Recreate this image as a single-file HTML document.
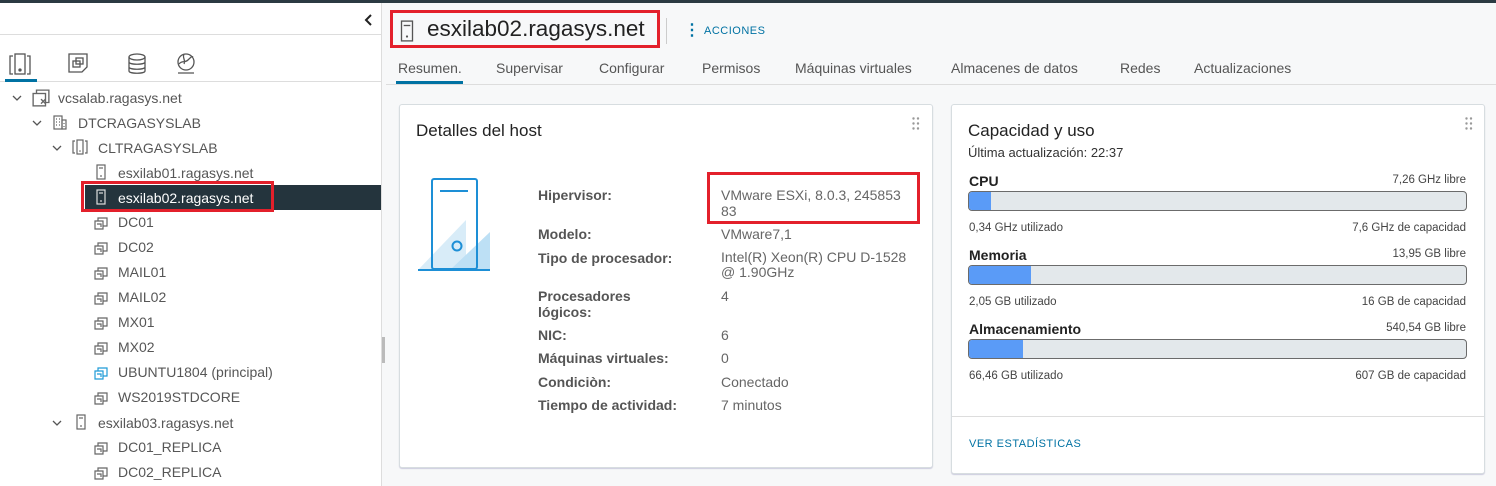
<!DOCTYPE html>
<html><head><meta charset="utf-8"><style>
*{box-sizing:border-box;margin:0;padding:0}
body{width:1496px;height:486px;overflow:hidden;font-family:"Liberation Sans",sans-serif;background:#f7f8f9;position:relative;color:#333}
.a{position:absolute;white-space:nowrap}
.tree{font-size:14px;color:#565656}
.lab{font-size:14px;font-weight:bold;color:#555}
.val{font-size:14px;color:#666}
.sm{font-size:11.5px;color:#444}
.bar{position:absolute;left:968px;width:499px;height:20px;border:1px solid #6b6b6b;border-radius:4px;background:#e3e8eb;overflow:hidden}
.bar div{height:100%;background:#5a9bf7}
.ic{position:absolute}
</style></head><body>
<svg width="0" height="0" style="position:absolute">
<defs>
<symbol id="host" viewBox="0 0 16 16"><g fill="none" stroke="currentColor" stroke-width="1.2"><rect x="4" y="1" width="8" height="14"/><path d="M6 4h4"/></g><circle cx="8" cy="12" r="0.9" fill="currentColor"/></symbol>
<symbol id="vm" viewBox="0 0 16 16"><g fill="none" stroke="currentColor" stroke-width="1.2"><path d="M2 6h8v8H2z"/><path d="M5 6V3h9v8h-4"/><path d="M4 9h4v3"/></g></symbol>
<symbol id="vc" viewBox="0 0 16 16"><g fill="none" stroke="currentColor" stroke-width="1.2"><rect x="1" y="4" width="11" height="11"/><path d="M4 4V1h11v11h-3"/><path d="M8 9l4 4M12 9l-4 4"/></g></symbol>
<symbol id="dc" viewBox="0 0 16 16"><g fill="none" stroke="currentColor" stroke-width="1.2"><rect x="2" y="2" width="8" height="13"/><rect x="10" y="6" width="4" height="9"/><path d="M4 5h1M7 5h1M4 8h1M7 8h1M4 11h1M7 11h1M12 9v1M12 12v1"/></g></symbol>
<symbol id="cl" viewBox="0 0 16 16"><g fill="none" stroke="currentColor" stroke-width="1.2"><path d="M3 2H1v12h2M13 2h2v12h-2"/><rect x="5" y="1" width="6" height="14"/></g><circle cx="8" cy="12" r="0.8" fill="currentColor"/></symbol>
</defs></svg>
<div class="a" style="left:0;top:0;width:1496px;height:3px;background:#2b3a42"></div>
<div class="a" style="left:0;top:3px;width:382px;height:483px;background:#fff;border-right:1px solid #ddd"></div>
<div class="a" style="left:382px;top:337px;width:3px;height:26px;background:#bbb"></div>
<svg class="ic" style="left:364px;top:13px" width="10" height="14"><path d="M7 2L2 7l5 5" fill="none" stroke="#222" stroke-width="2"/></svg>
<div class="a" style="left:0;top:34px;width:382px;height:1px;background:#ddd"></div>
<div class="a" style="left:0;top:81px;width:382px;height:1px;background:#ddd"></div>
<div class="a" style="left:5px;top:79px;width:32px;height:3px;background:#0072a3"></div>
<svg class="a" style="left:8px;top:52px" width="200" height="24" fill="none" stroke="#555" stroke-width="1.3">
<path d="M5 4H2v18h3M19 4h3v18h-3"/><rect x="7" y="2" width="10" height="20"/><circle cx="12" cy="18" r="1" fill="#555"/>
<path d="M61 2h18v13l-5 5H61z"/><rect x="65" y="9" width="7" height="6"/><rect x="68" y="6" width="7" height="6"/>
<ellipse cx="129" cy="5" rx="8" ry="3"/><path d="M121 5v14c0 3 16 3 16 0V5M121 10c0 3 16 3 16 0M121 15c0 3 16 3 16 0"/>
<circle cx="178" cy="10" r="8"/><path d="M171 12c3-4 6-1 9-4s4-4 5-3M176 2c-2 4 2 6 0 10M170 21h16"/>
</svg>
<svg class="ic" style="left:12px;top:94px" width="10" height="8"><path d="M1 2l4 4 4-4" fill="none" stroke="#555" stroke-width="1.3"/></svg>
<svg class="ic" style="left:32px;top:89px;color:#666" width="18" height="18"><use href="#vc"/></svg>
<div class="a tree" style="left:58px;top:90px">vcsalab.ragasys.net</div>
<svg class="ic" style="left:32px;top:119px" width="10" height="8"><path d="M1 2l4 4 4-4" fill="none" stroke="#555" stroke-width="1.3"/></svg>
<svg class="ic" style="left:52px;top:114px;color:#666" width="16" height="16"><use href="#dc"/></svg>
<div class="a tree" style="left:78px;top:115px">DTCRAGASYSLAB</div>
<svg class="ic" style="left:52px;top:144px" width="10" height="8"><path d="M1 2l4 4 4-4" fill="none" stroke="#555" stroke-width="1.3"/></svg>
<svg class="ic" style="left:72px;top:139px;color:#666" width="16" height="16"><use href="#cl"/></svg>
<div class="a tree" style="left:98px;top:140px">CLTRAGASYSLAB</div>
<svg class="ic" style="left:93px;top:164px;color:#666" width="16" height="16"><use href="#host"/></svg>
<div class="a tree" style="left:118px;top:165px">esxilab01.ragasys.net</div>
<div class="a" style="left:85px;top:185px;width:296px;height:25px;background:#24343d"></div>
<svg class="ic" style="left:93px;top:189px;color:#ddd" width="16" height="16"><use href="#host"/></svg>
<div class="a tree" style="left:118px;top:190px;color:#fff">esxilab02.ragasys.net</div>
<div class="a" style="left:81px;top:181px;width:193px;height:31px;border:3px solid #e3202b"></div>
<svg class="ic" style="left:93px;top:215px;color:#666" width="16" height="200">
<use href="#vm" y="0" width="16" height="16"/><use href="#vm" y="25" width="16" height="16"/><use href="#vm" y="50" width="16" height="16"/><use href="#vm" y="75" width="16" height="16"/><use href="#vm" y="100" width="16" height="16"/><use href="#vm" y="125" width="16" height="16"/><use href="#vm" y="150" width="16" height="16" style="color:#1e9bd7"/><use href="#vm" y="175" width="16" height="16"/></svg>
<div class="a tree" style="left:118px;top:210px;line-height:25px">DC01<br>DC02<br>MAIL01<br>MAIL02<br>MX01<br>MX02<br>UBUNTU1804 (principal)<br>WS2019STDCORE</div>
<svg class="ic" style="left:52px;top:419px" width="10" height="8"><path d="M1 2l4 4 4-4" fill="none" stroke="#555" stroke-width="1.3"/></svg>
<svg class="ic" style="left:73px;top:414px;color:#666" width="16" height="16"><use href="#host"/></svg>
<div class="a tree" style="left:98px;top:415px">esxilab03.ragasys.net</div>
<svg class="ic" style="left:93px;top:440px;color:#666" width="16" height="45"><use href="#vm" y="0" width="16" height="16"/><use href="#vm" y="25" width="16" height="16"/></svg>
<div class="a tree" style="left:118px;top:435px;line-height:25px">DC01_REPLICA<br>DC02_REPLICA</div>

<div class="a" style="left:390px;top:10px;width:270px;height:38px;border:3px solid #e3202b"></div>
<svg class="ic" style="left:398px;top:20px;color:#555" width="18" height="22" viewBox="0 0 16 20"><g fill="none" stroke="currentColor" stroke-width="1.2"><rect x="3" y="1" width="10" height="18"/><path d="M5 5h6"/></g><circle cx="8" cy="15" r="1" fill="currentColor"/></svg>
<div class="a" style="left:427px;top:16px;font-size:22.5px;color:#222">esxilab02.ragasys.net</div>
<div class="a" style="left:666px;top:18px;width:1px;height:26px;background:#ccc"></div>
<div class="a" style="left:684px;top:20px;font-size:16px;color:#0072a3;font-weight:bold">&#8942;</div>
<div class="a" style="left:704px;top:25px;font-size:11px;color:#0072a3;letter-spacing:.5px">ACCIONES</div>
<div class="a" style="left:386px;top:84px;width:1110px;height:1px;background:#ddd"></div>
<div class="a" style="left:396px;top:81px;width:67px;height:3px;background:#0072a3"></div>
<div class="a" style="top:60px;left:0;font-size:14px;color:#555">
<span class="a" style="left:398px">Resumen.</span><span class="a" style="left:496px">Supervisar</span><span class="a" style="left:599px">Configurar</span><span class="a" style="left:702px">Permisos</span><span class="a" style="left:795px">Máquinas virtuales</span><span class="a" style="left:951px">Almacenes de datos</span><span class="a" style="left:1120px">Redes</span><span class="a" style="left:1194px">Actualizaciones</span></div>

<div class="a" style="left:399px;top:104px;width:534px;height:364px;background:#fff;border:1px solid #d7dde0;border-radius:3px;box-shadow:0 1px 1px #ccd"></div>
<div class="a" style="left:416px;top:121px;font-size:17px;color:#222">Detalles del host</div>
<svg class="ic" style="left:912px;top:117px" width="8" height="14" fill="#999"><circle cx="1.5" cy="1.5" r="1.2"/><circle cx="6" cy="1.5" r="1.2"/><circle cx="1.5" cy="6.5" r="1.2"/><circle cx="6" cy="6.5" r="1.2"/><circle cx="1.5" cy="11.5" r="1.2"/><circle cx="6" cy="11.5" r="1.2"/></svg>
<svg class="a" style="left:416px;top:176px" width="78" height="96"><polygon points="2,94 50,44 50,94" fill="#d8ecf8"/><polygon points="34,94 74,56 74,94" fill="#bde0f5"/><rect x="16" y="3" width="45" height="90" fill="none" stroke="#1d8fd6" stroke-width="2" rx="2"/><path d="M24 15h28" stroke="#1d8fd6" stroke-width="2"/><circle cx="41" cy="70" r="4.5" fill="none" stroke="#1d8fd6" stroke-width="2"/><path d="M2 94h72" stroke="#1d8fd6" stroke-width="2"/></svg>
<div class="a lab" style="left:538px;top:187px;line-height:16px">Hipervisor:</div>
<div class="a val" style="left:721px;top:187px;line-height:16px">VMware ESXi, 8.0.3, 245853<br>83</div>
<div class="a" style="left:707px;top:172px;width:213px;height:52px;border:3px solid #e3202b"></div>
<div class="a lab" style="left:538px;top:226px">Modelo:</div><div class="a val" style="left:721px;top:226px">VMware7,1</div>
<div class="a lab" style="left:538px;top:250px">Tipo de procesador:</div><div class="a val" style="left:721px;top:250px;line-height:15px">Intel(R) Xeon(R) CPU D-1528<br>@ 1.90GHz</div>
<div class="a lab" style="left:538px;top:288px;line-height:16px">Procesadores<br>lógicos:</div><div class="a val" style="left:721px;top:288px">4</div>
<div class="a lab" style="left:538px;top:327px">NIC:</div><div class="a val" style="left:721px;top:327px">6</div>
<div class="a lab" style="left:538px;top:350px">Máquinas virtuales:</div><div class="a val" style="left:721px;top:350px">0</div>
<div class="a lab" style="left:538px;top:374px">Condiciòn:</div><div class="a val" style="left:721px;top:374px">Conectado</div>
<div class="a lab" style="left:538px;top:397px">Tiempo de actividad:</div><div class="a val" style="left:721px;top:397px">7 minutos</div>

<div class="a" style="left:951px;top:104px;width:534px;height:370px;background:#fff;border:1px solid #d7dde0;border-radius:3px;box-shadow:0 1px 1px #ccd"></div>
<svg class="ic" style="left:1465px;top:117px" width="8" height="14" fill="#999"><circle cx="1.5" cy="1.5" r="1.2"/><circle cx="6" cy="1.5" r="1.2"/><circle cx="1.5" cy="6.5" r="1.2"/><circle cx="6" cy="6.5" r="1.2"/><circle cx="1.5" cy="11.5" r="1.2"/><circle cx="6" cy="11.5" r="1.2"/></svg>
<div class="a" style="left:968px;top:121px;font-size:17px;color:#222">Capacidad y uso</div>
<div class="a" style="left:968px;top:145px;font-size:13px;color:#333">Última actualización: 22:37</div>
<div class="a" style="left:969px;top:173px;font-size:14px;font-weight:bold;color:#222">CPU</div>
<div class="a sm" style="right:30px;top:174px">7,26 GHz libre</div>
<div class="bar" style="top:191px"><div style="width:22px"></div></div>
<div class="a sm" style="left:969px;top:222px">0,34 GHz utilizado</div><div class="a sm" style="right:30px;top:222px">7,6 GHz de capacidad</div>
<div class="a" style="left:969px;top:247px;font-size:14px;font-weight:bold;color:#222">Memoria</div>
<div class="a sm" style="right:30px;top:248px">13,95 GB libre</div>
<div class="bar" style="top:265px"><div style="width:62px"></div></div>
<div class="a sm" style="left:969px;top:296px">2,05 GB utilizado</div><div class="a sm" style="right:30px;top:296px">16 GB de capacidad</div>
<div class="a" style="left:969px;top:321px;font-size:14px;font-weight:bold;color:#222">Almacenamiento</div>
<div class="a sm" style="right:30px;top:322px">540,54 GB libre</div>
<div class="bar" style="top:339px"><div style="width:54px"></div></div>
<div class="a sm" style="left:969px;top:370px">66,46 GB utilizado</div><div class="a sm" style="right:30px;top:370px">607 GB de capacidad</div>
<div class="a" style="left:952px;top:416px;width:532px;height:1px;background:#ddd"></div>
<div class="a" style="left:969px;top:438px;font-size:11px;color:#0072a3;letter-spacing:.5px">VER ESTADÍSTICAS</div>
</body></html>
